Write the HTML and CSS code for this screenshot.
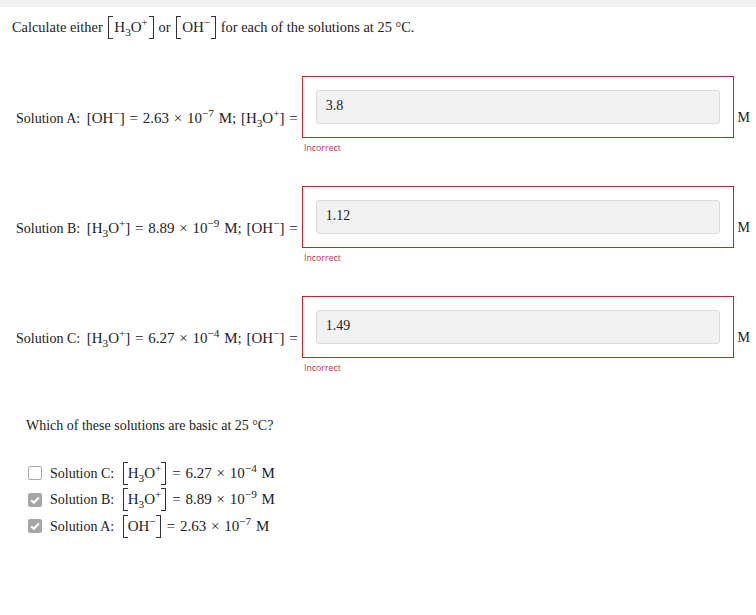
FILE: index.html
```html
<!DOCTYPE html>
<html lang="en">
<head>
    <meta charset="UTF-8">
    <meta name="viewport" content="width=device-width, initial-scale=1.0">
    <title>Acids and Bases</title>
    <link rel="stylesheet" href="styles.css">
</head>
<body>

    <div class="topbar"></div>

    <p class="intro">
        Calculate either <span class="brk">H<sub>3</sub>O<sup>+</sup></span> or <span class="brk">OH<sup>&minus;</sup></span> for each of the solutions at 25 &deg;C.
    </p>

    <div class="problems">
        <div class="problem">
            <div class="row">
                <span class="label">Solution A: <span class="math">[OH<sup>&minus;</sup>] = 2.63 &times; 10<sup>&minus;7</sup> M; [H<sub>3</sub>O<sup>+</sup>] =</span></span>
                <div class="field">
                    <input class="answer" type="text" value="3.8">
                </div>
                <span class="unit">M</span>
            </div>
            <div class="feedback">Incorrect</div>
        </div>

        <div class="problem">
            <div class="row">
                <span class="label">Solution B: <span class="math">[H<sub>3</sub>O<sup>+</sup>] = 8.89 &times; 10<sup>&minus;9</sup> M; [OH<sup>&minus;</sup>] =</span></span>
                <div class="field">
                    <input class="answer" type="text" value="1.12">
                </div>
                <span class="unit">M</span>
            </div>
            <div class="feedback">Incorrect</div>
        </div>

        <div class="problem">
            <div class="row">
                <span class="label">Solution C: <span class="math">[H<sub>3</sub>O<sup>+</sup>] = 6.27 &times; 10<sup>&minus;4</sup> M; [OH<sup>&minus;</sup>] =</span></span>
                <div class="field">
                    <input class="answer" type="text" value="1.49">
                </div>
                <span class="unit">M</span>
            </div>
            <div class="feedback">Incorrect</div>
        </div>
    </div>

    <div class="question">
        <p class="prompt">Which of these solutions are basic at 25 &deg;C?</p>
        <ul class="choices">
            <li class="choice">
                <span class="box"></span>
                <span class="choice-text">Solution C: <span class="brk">H<sub>3</sub>O<sup>+</sup></span><span class="math">= 6.27 &times; 10<sup>&minus;4</sup> M</span></span>
            </li>
            <li class="choice">
                <span class="box checked"><svg viewBox="0 0 14 14" width="14" height="14"><path d="M3.2 7.3 L5.9 9.8 L10.8 4.4" fill="none" stroke="#fff" stroke-width="2.2"/></svg></span>
                <span class="choice-text">Solution B: <span class="brk">H<sub>3</sub>O<sup>+</sup></span><span class="math">= 8.89 &times; 10<sup>&minus;9</sup> M</span></span>
            </li>
            <li class="choice">
                <span class="box checked"><svg viewBox="0 0 14 14" width="14" height="14"><path d="M3.2 7.3 L5.9 9.8 L10.8 4.4" fill="none" stroke="#fff" stroke-width="2.2"/></svg></span>
                <span class="choice-text">Solution A: <span class="brk">OH<sup>&minus;</sup></span><span class="math">= 2.63 &times; 10<sup>&minus;7</sup> M</span></span>
            </li>
        </ul>
    </div>

</body>
</html>
```

FILE: styles.css
```css
body {
    margin: 0;
    font-family: "Liberation Serif", "Times New Roman", serif;
    font-size: 14px;
    color: #222;
    background: #fff;
}
.topbar {
    height: 7px;
    background: #f2f2f2;
}
sup, sub {
    font-size: 75%;
    line-height: 0;
}
sub {
    vertical-align: -0.35em;
}
sup {
    vertical-align: 0.5em;
}
.math {
    font-size: 15px;
    word-spacing: 1px;
}
.intro {
    margin: 0;
    padding: 9px 12px 0;
    font-size: 14.4px;
    line-height: 20px;
}
.brk {
    display: inline-block;
    margin: 0 1px 0 2px;
    padding: 3px 5px;
    font-size: 15px;
    line-height: 17px;
    border-left: 1px solid #333;
    border-right: 1px solid #333;
    background:
        linear-gradient(#333, #333) left top / 4px 1px no-repeat,
        linear-gradient(#333, #333) left bottom / 4px 1px no-repeat,
        linear-gradient(#333, #333) right top / 4px 1px no-repeat,
        linear-gradient(#333, #333) right bottom / 4px 1px no-repeat;
}
.problems {
    padding: 37px 6px 0 16px;
}
.problem {
    margin-bottom: 32px;
}
.row {
    display: flex;
    align-items: flex-start;
}
.label {
    padding-top: 32px;
    line-height: 20px;
    white-space: nowrap;
}
.label .math {
    margin-left: 3px;
}
.field {
    flex: 1;
    margin-left: 4px;
    padding: 13px;
    border: 1px solid #c0262d;
}
.answer {
    display: block;
    width: 100%;
    box-sizing: border-box;
    height: 34px;
    padding: 0 9px 3px;
    border: 1px solid #dcdcdc;
    border-radius: 3px;
    background: #f2f2f2;
    font-family: "Liberation Serif", "Times New Roman", serif;
    font-size: 14px;
    color: #222;
}
.unit {
    padding-top: 32px;
    margin-left: 4px;
    line-height: 20px;
}
.feedback {
    margin: 4px 0 0 288px;
    font-family: "Open Sans", "Noto Sans", sans-serif;
    font-size: 8.8px;
    line-height: 12px;
    color: #cf2a55;
}
.question {
    padding: 0 26px;
}
.prompt {
    margin: 0;
    padding-top: 10px;
    line-height: 20px;
}
.choices {
    list-style: none;
    margin: 0;
    padding: 24px 0 0 2px;
}
.choice {
    display: flex;
    align-items: center;
    gap: 8px;
    height: 26.5px;
}
.choice-text {
    white-space: nowrap;
}
.choice-text .brk {
    margin: 0 6px 0 5px;
    padding: 3px 4px;
}
.box {
    width: 12px;
    height: 12px;
    border: 1px solid #aaa;
    border-radius: 2px;
    background: #fff;
    flex: none;
}
.box.checked {
    width: 14px;
    height: 14px;
    border: none;
    background: #a6a6a6;
}
.box svg {
    display: block;
}
```
